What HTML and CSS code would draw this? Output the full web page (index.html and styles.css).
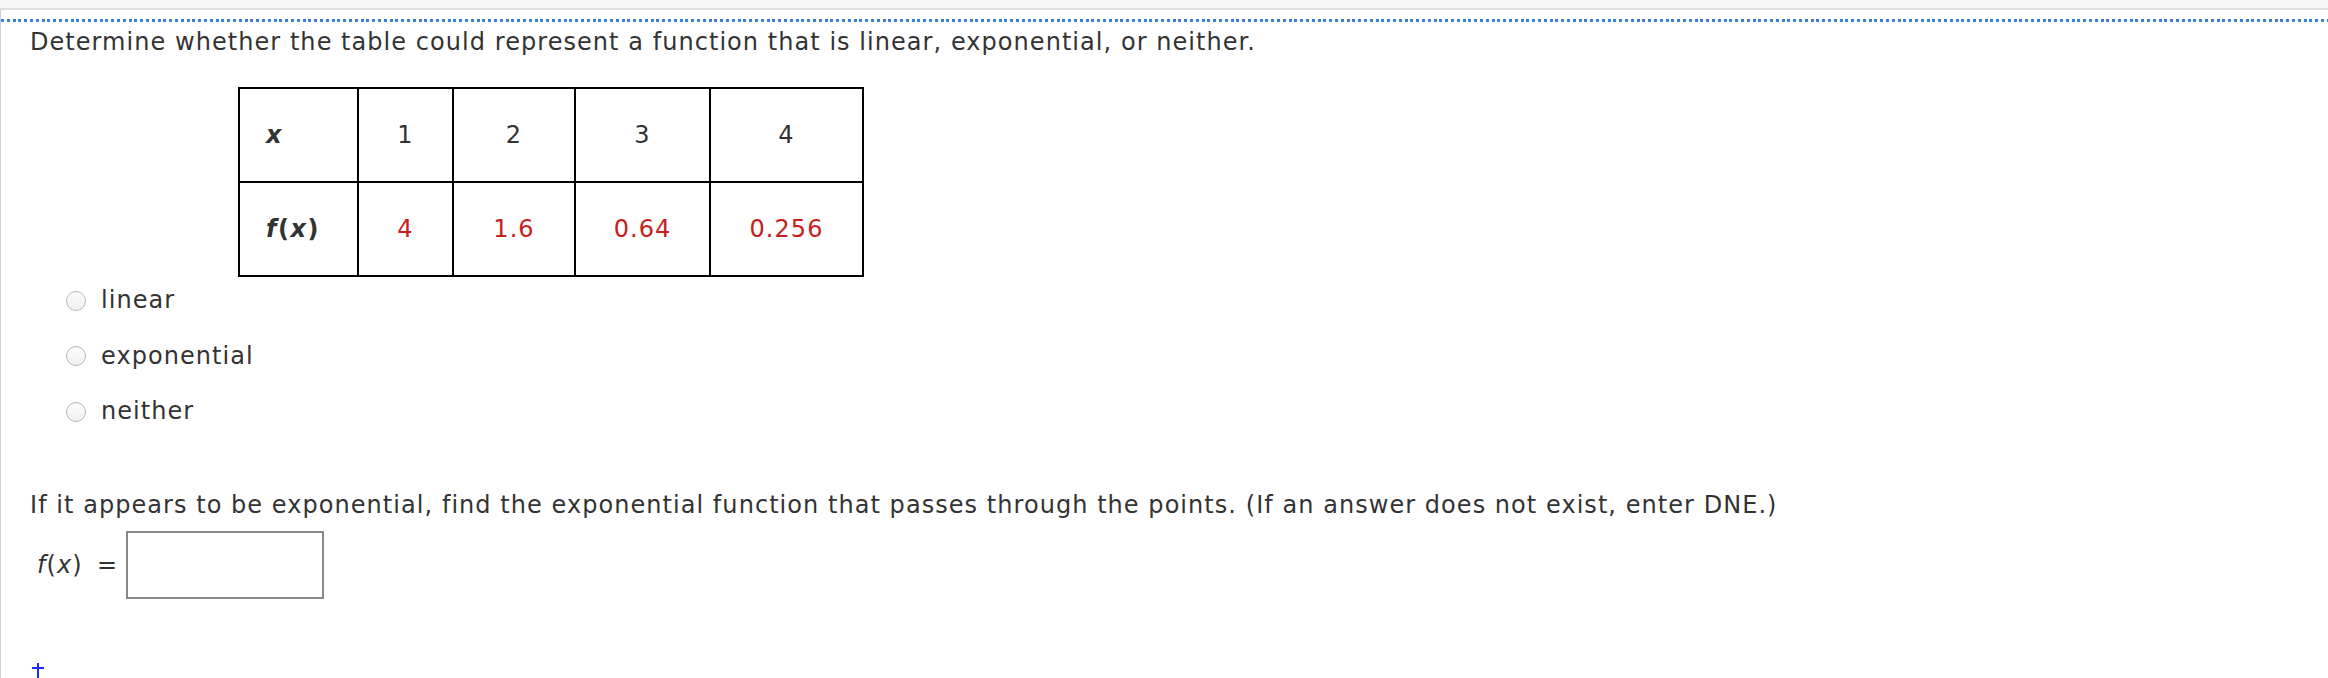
FILE: index.html
```html
<!DOCTYPE html>
<html lang="en">
<head>
<meta charset="utf-8">
<title>Question</title>
<link rel="stylesheet" href="styles.css">
</head>
<body>
<div class="topbar"></div>
<div class="frame">
  <div class="question">
    <p class="prompt">Determine whether the table could represent a function that is linear, exponential, or neither.</p>
    <table class="values">
      <colgroup>
        <col class="c0"><col class="c1"><col class="c2"><col class="c3"><col class="c4">
      </colgroup>
      <tr>
        <th><i>x</i></th>
        <td>1</td><td>2</td><td>3</td><td>4</td>
      </tr>
      <tr>
        <th><i>f</i>(<i>x</i>)</th>
        <td class="red">4</td><td class="red">1.6</td><td class="red">0.64</td><td class="red">0.256</td>
      </tr>
    </table>
    <ul class="choices">
      <li><span class="radio"></span><span>linear</span></li>
      <li><span class="radio"></span><span>exponential</span></li>
      <li><span class="radio"></span><span>neither</span></li>
    </ul>
    <p class="prompt prompt2">If it appears to be exponential, find the exponential function that passes through the points. (If an answer does not exist, enter DNE.)</p>
    <div class="answer">
      <span class="math"><i>f</i>(<i>x</i>)</span>
      <span class="eq">=</span>
      <span class="input"></span>
    </div>
    <div class="plus"><svg width="14" height="15" viewBox="0 0 14 15"><path d="M0 5H12M6 0V15" stroke="#1f2bff" stroke-width="2" fill="none"/></svg></div>
  </div>
</div>
</body>
</html>
```
FILE: styles.css
```css
html, body {
  margin: 0;
  padding: 0;
  background: #fff;
}
body {
  font-family: "DejaVu Sans", Verdana, sans-serif;
  font-size: 24px;
  letter-spacing: 1.05px;
  color: #333;
  height: 678px;
  overflow: hidden;
}
.topbar {
  height: 8px;
  background: #f6f6f6;
  border-bottom: 2px solid #dedede;
}
.frame {
  box-sizing: border-box;
  height: 668px;
  overflow: hidden;
  border-left: 1px solid #cfcfcf;
  padding-top: 9px;
}
.question {
  background: repeating-linear-gradient(to right, #3a7fdc 0 3px, transparent 3px 5.8px) top left / 100% 3px no-repeat;
  padding: 9px 0 0 29px;
}
.prompt {
  margin: 0;
  line-height: 29px;
}
.values {
  margin: 30px 0 0 208px;
  border-collapse: collapse;
  table-layout: fixed;
  width: 624px;
  border: 2px solid #000;
}
.values th, .values td {
  border: 2px solid #000;
  height: 92px;
  padding: 0;
  text-align: center;
  vertical-align: middle;
  font-weight: normal;
  line-height: 29px;
}
.values th {
  font-weight: bold;
  text-align: left;
  padding-left: 26px;
  letter-spacing: 1.5px;
}
.c0 { width: 119px; }
.c1 { width: 95px; }
.c2 { width: 122px; }
.c3 { width: 135px; }
.c4 { width: 153px; }
.values .red {
  color: #c8201b;
}
.choices {
  list-style: none;
  margin: 9px 0 0 0;
  padding: 0;
}
.choices li {
  display: flex;
  align-items: center;
  line-height: 29px;
  height: 29px;
  margin-bottom: 26.5px;
}
.radio {
  width: 18px;
  height: 18px;
  border: 1px solid #b8b8b8;
  border-radius: 50%;
  background: linear-gradient(#fdfdfd, #f0f0f0);
  margin-left: 36px;
  margin-right: 15px;
  flex: none;
}
.prompt2 {
  margin-top: 65px;
}
.answer {
  display: flex;
  align-items: center;
  margin-top: 11px;
  height: 68px;
}
.math {
  margin-left: 7px;
  width: 46px;
  white-space: nowrap;
}
.eq {
  width: 16px;
  text-align: center;
  letter-spacing: 0;
  margin-left: 14px;
  margin-right: 13px;
}
.input {
  display: block;
  width: 194px;
  height: 64px;
  border: 2px solid #888;
  background: #fff;
}
.plus {
  margin: 64px 0 0 2px;
  height: 15px;
  line-height: 0;
}
```
